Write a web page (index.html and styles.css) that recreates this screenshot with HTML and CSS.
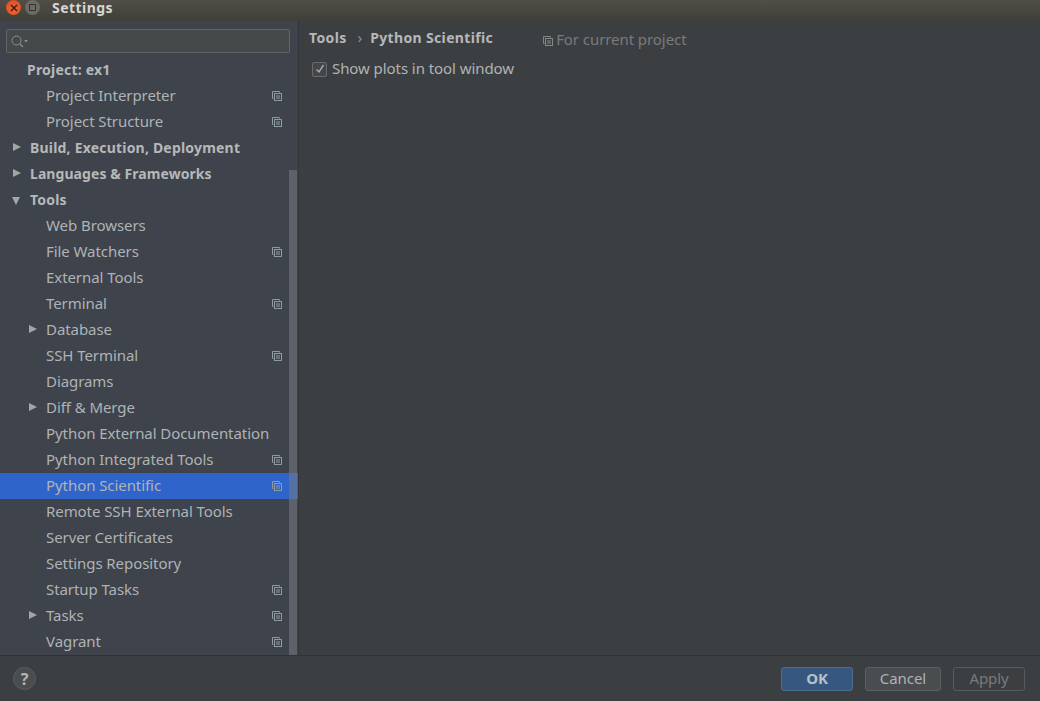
FILE: index.html
```html
<!DOCTYPE html>
<html lang="en">
<head>
<meta charset="utf-8">
<title>Settings</title>
<link rel="stylesheet" href="styles.css">
</head>
<body>
<svg class="defs" width="0" height="0" aria-hidden="true">
  <defs>
    <symbol id="copy" viewBox="0 0 10 10">
      <path d="M7.5 1.5V.5H.5v7h1" fill="none" stroke="currentColor"/>
      <rect x="2.5" y="2.5" width="7" height="7" fill="none" stroke="currentColor"/>
      <path d="M4 5h4M4 7h4" stroke="currentColor"/>
    </symbol>
  </defs>
</svg>
<div class="window">
  <header class="titlebar">
    <span class="wbtn wbtn-close"><svg width="8" height="8" viewBox="0 0 8 8"><path d="M1 1l6 6M7 1L1 7" stroke="#3a1a0c" stroke-width="1.4"/></svg></span>
    <span class="wbtn wbtn-max"><span class="wbtn-square"></span></span>
    <span class="title">Settings</span>
  </header>
  <div class="main">
    <aside class="sidebar">
      <div class="search">
        <svg class="search-icon" width="17" height="13" viewBox="0 0 17 13"><circle cx="5.5" cy="5.5" r="4.5" fill="none" stroke="#8b8f91"/><path d="M9 9l3 3" stroke="#8b8f91" stroke-width="1.2"/><path d="M13 5h4l-2 2.5z" fill="#8b8f91"/></svg>
      </div>
      <ul class="tree">
        <li class="row row-head row-project"><span class="label">Project: ex1</span></li>
        <li class="row row-child"><span class="label">Project Interpreter</span><svg class="copy"><use href="#copy"/></svg></li>
        <li class="row row-child"><span class="label">Project Structure</span><svg class="copy"><use href="#copy"/></svg></li>
        <li class="row row-head"><span class="arrow arrow-right"></span><span class="label">Build, Execution, Deployment</span></li>
        <li class="row row-head row-tight"><span class="arrow arrow-right"></span><span class="label">Languages &amp; Frameworks</span></li>
        <li class="row row-head"><span class="arrow arrow-down"></span><span class="label">Tools</span></li>
        <li class="row row-child"><span class="label">Web Browsers</span></li>
        <li class="row row-child"><span class="label">File Watchers</span><svg class="copy"><use href="#copy"/></svg></li>
        <li class="row row-child"><span class="label">External Tools</span></li>
        <li class="row row-child"><span class="label">Terminal</span><svg class="copy"><use href="#copy"/></svg></li>
        <li class="row row-child row-branch"><span class="arrow arrow-right"></span><span class="label">Database</span></li>
        <li class="row row-child"><span class="label">SSH Terminal</span><svg class="copy"><use href="#copy"/></svg></li>
        <li class="row row-child"><span class="label">Diagrams</span></li>
        <li class="row row-child row-branch"><span class="arrow arrow-right"></span><span class="label">Diff &amp; Merge</span></li>
        <li class="row row-child"><span class="label">Python External Documentation</span></li>
        <li class="row row-child"><span class="label">Python Integrated Tools</span><svg class="copy"><use href="#copy"/></svg></li>
        <li class="row row-child row-selected"><span class="label">Python Scientific</span><svg class="copy"><use href="#copy"/></svg></li>
        <li class="row row-child"><span class="label">Remote SSH External Tools</span></li>
        <li class="row row-child"><span class="label">Server Certificates</span></li>
        <li class="row row-child"><span class="label">Settings Repository</span></li>
        <li class="row row-child"><span class="label">Startup Tasks</span><svg class="copy"><use href="#copy"/></svg></li>
        <li class="row row-child row-branch"><span class="arrow arrow-right"></span><span class="label">Tasks</span><svg class="copy"><use href="#copy"/></svg></li>
        <li class="row row-child"><span class="label">Vagrant</span><svg class="copy"><use href="#copy"/></svg></li>
      </ul>
      <div class="scrollthumb"></div>
    </aside>
    <main class="content">
      <div class="crumbs">
        <span class="crumb">Tools</span>
        <span class="crumb-sep">›</span>
        <span class="crumb">Python Scientific</span>
        <span class="scope"><svg class="copy copy-scope"><use href="#copy"/></svg>For current project</span>
      </div>
      <label class="check">
        <span class="checkbox"><svg width="10" height="10" viewBox="0 0 10 10"><path d="M1.5 5.5L4 8l4.5-7" fill="none" stroke="#a9adaf" stroke-width="1.4"/></svg></span>
        <span class="check-label">Show plots in tool window</span>
      </label>
    </main>
  </div>
  <footer class="footer">
    <span class="help">?</span>
    <div class="buttons">
      <span class="btn btn-ok">OK</span>
      <span class="btn btn-cancel">Cancel</span>
      <span class="btn btn-apply">Apply</span>
    </div>
  </footer>
</div>
</body>
</html>
```
FILE: styles.css
```css
* { box-sizing: border-box; }
html, body { margin: 0; padding: 0; }
body {
  width: 1040px;
  height: 701px;
  overflow: hidden;
  background: #3c3f41;
  font-family: "Noto Sans", "Open Sans", "DejaVu Sans", sans-serif;
  font-size: 15px;
  letter-spacing: -.07px;
  color: #b0b3b5;
}
.defs { position: absolute; }
.window { display: flex; flex-direction: column; height: 701px; }

.titlebar {
  height: 21px;
  flex: none;
  display: flex;
  align-items: center;
  padding: 0 0 6px 6px;
  background: linear-gradient(#514e47, #3f3e3a);
}
.wbtn {
  width: 15px;
  height: 15px;
  border-radius: 50%;
  display: flex;
  align-items: center;
  justify-content: center;
  margin-right: 4px;
}
.wbtn-close { background: radial-gradient(circle at 50% 60%, #f0683a, #d9481c); }
.wbtn-max { background: #6b6a64; }
.wbtn-square { width: 7px; height: 7px; border: 1px solid #35342f; }
.title {
  margin-left: 8px;
  font-size: 14px;
  font-weight: 700;
  color: #d8d6d0;
  letter-spacing: .45px;
}

.main { flex: 1; display: flex; min-height: 0; }

.sidebar {
  width: 299px;
  flex: none;
  position: relative;
  background: #3e434c;
  border-right: 1px solid #33363a;
  padding-top: 8px;
}
.search {
  margin-left: 6px;
  width: 284px;
  height: 24px;
  background: #45494a;
  border: 1px solid #646464;
  border-radius: 2px;
  display: flex;
  align-items: center;
  padding-left: 4px;
}
.tree { list-style: none; margin: 4px 0 0; padding: 0; }
.row {
  height: 26px;
  display: flex;
  align-items: center;
  position: relative;
  padding-right: 16px;
  white-space: nowrap;
}
.row-head { padding-left: 30px; font-weight: 700; font-size: 14px; letter-spacing: .2px; color: #b6b8ba; }
.row-project { padding-left: 27px; padding-top: 1px; }
.row-tight { letter-spacing: .07px; }
.row-child { padding-left: 46px; }
.row-selected { background: #2f65ca; }
.label { flex: 1; padding-bottom: 2px; }
.arrow { position: absolute; width: 0; height: 0; }
.arrow-right {
  left: 13px;
  top: 8px;
  border-left: 8px solid #a3a6a8;
  border-top: 4.5px solid transparent;
  border-bottom: 4.5px solid transparent;
}
.arrow-down {
  left: 12px;
  top: 10px;
  border-top: 8px solid #a3a6a8;
  border-left: 4.5px solid transparent;
  border-right: 4.5px solid transparent;
}
.row-branch .arrow-right { left: 29px; }
.copy { width: 10px; height: 10px; flex: none; color: #8f9ba3; }
.scrollthumb {
  position: absolute;
  left: 289px;
  top: 149px;
  bottom: 0;
  width: 8px;
  background: rgba(118, 122, 130, .55);
}

.content { flex: 1; padding: 6px 0 0 10px; }
.crumbs { display: flex; align-items: baseline; height: 20px; white-space: nowrap; }
.crumb { font-weight: 700; font-size: 14px; letter-spacing: .35px; color: #b6b8ba; }
.crumb-sep { margin: 0 8px 0 11px; color: #8f9294; }
.scope { margin-left: 50px; color: #787b7d; position: relative; top: 2px; }
.copy-scope { color: #83878a; margin-right: 3px; vertical-align: -1px; }
.check { display: flex; align-items: center; margin: 12px 0 0 3px; height: 20px; }
.checkbox {
  width: 15px;
  height: 15px;
  border: 1px solid #6b6b6b;
  border-radius: 2px;
  background: #43474a;
  display: flex;
  align-items: center;
  justify-content: center;
  margin-right: 5px;
}
.check-label { color: #b0b3b5; padding-bottom: 2px; }

.footer {
  height: 46px;
  flex: none;
  border-top: 1px solid #323232;
  display: flex;
  align-items: center;
  justify-content: space-between;
  padding: 0 15px 0 13px;
}
.help {
  width: 23px;
  height: 23px;
  border-radius: 50%;
  background: #4a4d4f;
  border: 1px solid #5a5d5f;
  color: #b4b6b8;
  font-weight: 700;
  font-size: 16px;
  display: flex;
  align-items: center;
  justify-content: center;
}
.buttons { display: flex; gap: 12px; }
.btn {
  height: 24px;
  border-radius: 3px;
  display: flex;
  align-items: center;
  justify-content: center;
  padding-bottom: 2px;
}
.btn-ok { width: 72px; background: #365880; border: 1px solid #4c708c; font-weight: 700; color: #b8c0c8; }
.btn-cancel { width: 76px; background: #4a4d4f; border: 1px solid #5e6060; color: #b0b3b5; }
.btn-apply { width: 72px; background: #3c3f41; border: 1px solid #585a5c; color: #777a7c; }
```
